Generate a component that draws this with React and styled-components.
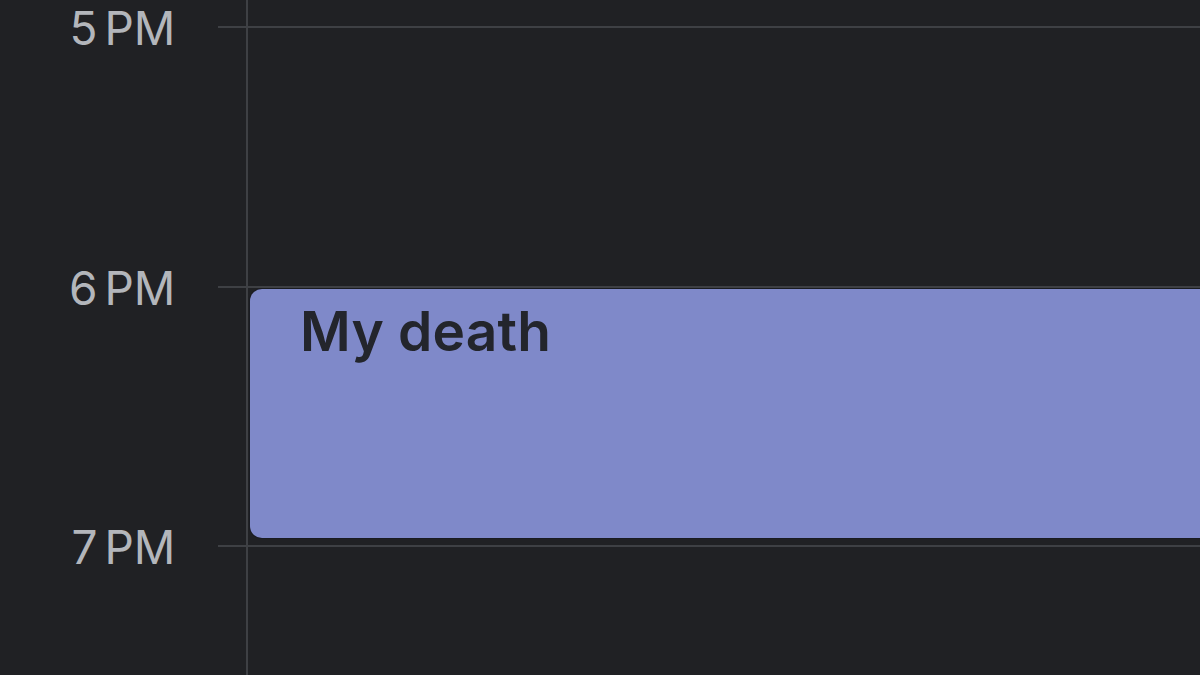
import React from "react";
import styled, { createGlobalStyle } from "styled-components";

const GlobalStyle = createGlobalStyle`
  html, body {
    margin: 0;
    padding: 0;
    background: #202124;
    overflow: hidden;
  }
  body {
    font-family: Inter, Roboto, "Noto Sans", "Liberation Sans", sans-serif;
  }
`;

const Calendar = styled.div`
  width: 1200px;
  height: 675px;
  background: #202124;
  overflow: hidden;
`;

const HourRow = styled.div`
  display: grid;
  grid-template-columns: 218px 28px 1fr;
  height: ${(props) => props.height}px;
`;

const Label = styled.div`
  height: 52px;
  margin-top: -24px;
  padding-right: 43px;
  text-align: right;
  font-size: 46px;
  line-height: 52px;
  font-weight: 400;
  color: #b3b6bb;
  word-spacing: -0.12em;
  letter-spacing: -0.2px;
  white-space: nowrap;
`;

const Tick = styled.div`
  border-top: ${(props) => (props.lined ? "2px solid #3e4044" : "none")};
`;

const Cell = styled.div`
  border-top: ${(props) => (props.lined ? "2px solid #3e4044" : "none")};
  border-left: 2px solid #3e4044;
`;

const Event = styled.div`
  height: 249px;
  margin: 1px -30px 0 2px;
  box-sizing: border-box;
  padding: 14px 50px;
  border-radius: 12px;
  background: #7f89c9;
  box-shadow: 0 0 0 1px #1a1c22;
`;

const EventTitle = styled.div`
  font-size: 55px;
  line-height: 56px;
  font-weight: 600;
  color: #23252c;
  letter-spacing: 0.2px;
`;

const hours = [
  { label: "5 PM", height: 260 },
  { label: "6 PM", height: 259, event: "My death" },
  { label: "7 PM", height: 140 },
];

export default function App() {
  return (
    <Calendar>
      <GlobalStyle />
      <HourRow height={26}>
        <div />
        <Tick />
        <Cell />
      </HourRow>
      {hours.map((h) => (
        <HourRow key={h.label} height={h.height}>
          <Label>{h.label}</Label>
          <Tick lined />
          <Cell lined>
            {h.event && (
              <Event>
                <EventTitle>{h.event}</EventTitle>
              </Event>
            )}
          </Cell>
        </HourRow>
      ))}
    </Calendar>
  );
}
